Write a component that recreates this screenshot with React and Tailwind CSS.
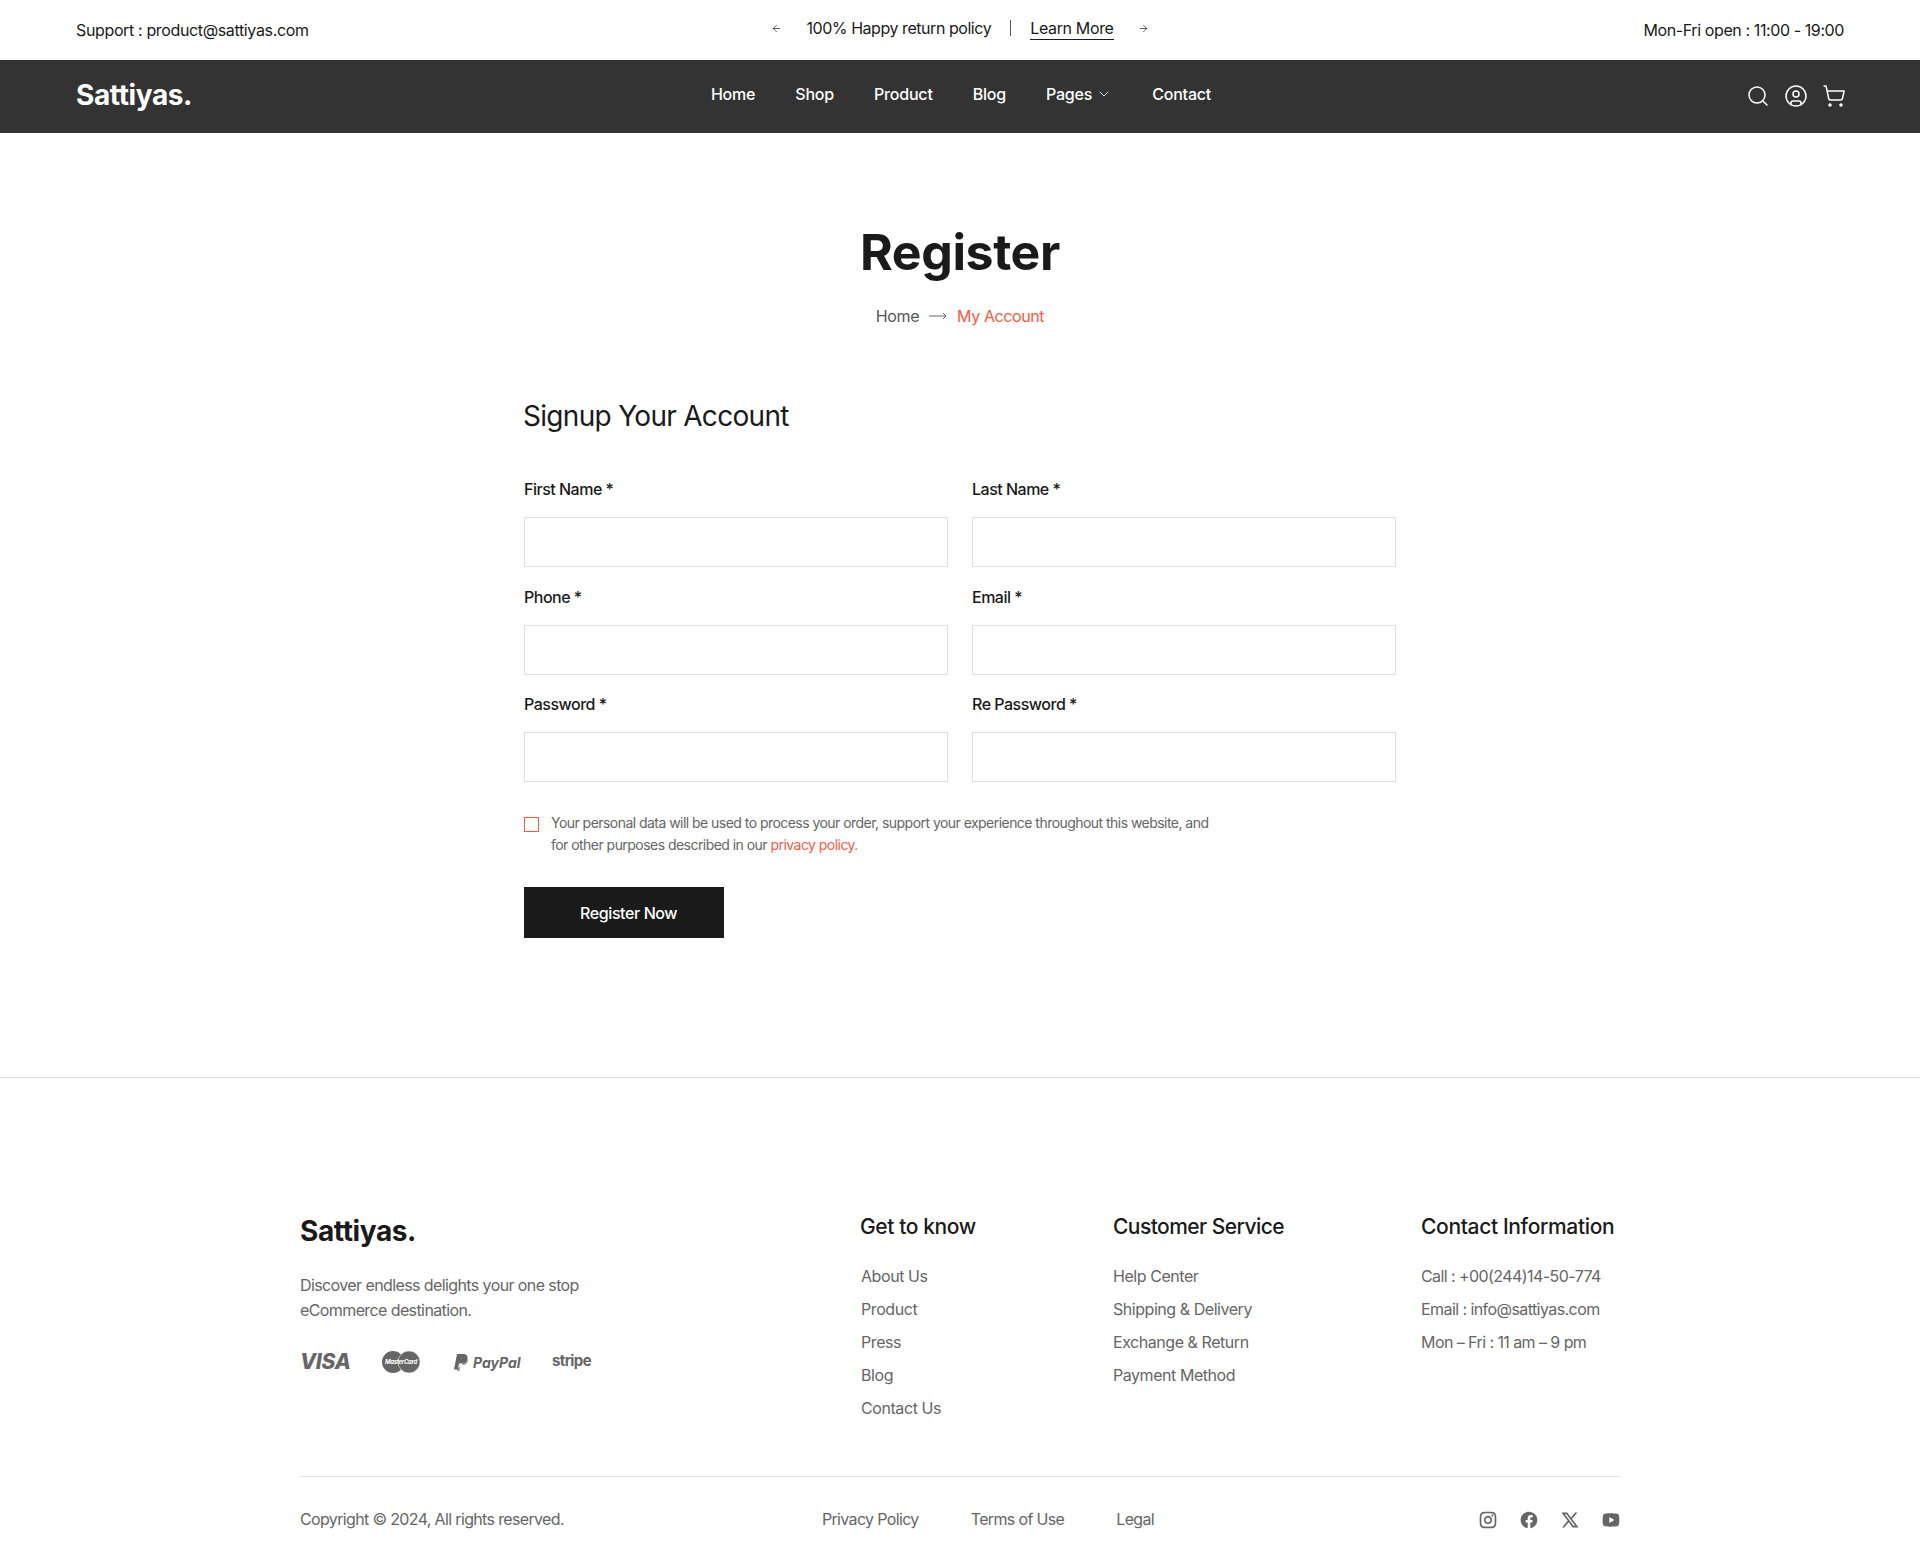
import React from "react";
import { ArrowLeft, ArrowRight, ChevronDown, Search, CircleUser, ShoppingCart } from "lucide-react";
import { RiInstagramLine, RiFacebookCircleFill, RiTwitterXLine, RiYoutubeFill } from "react-icons/ri";

function Field({ label }) {
  return (
    <div className="flex flex-col">
      <label className="h-[40px] text-[16px] leading-[24px] font-medium text-[#1a1a1a] tracking-[-0.5px]">{label}</label>
      <input className="h-[50px] w-full border border-[#dedede] bg-white outline-none" />
    </div>
  );
}

function FooterCol({ title, items, width, tracking, titleTracking }) {
  return (
    <div className={width}>
      <h4 className={"text-[21px] leading-[28px] font-medium text-[#1a1a1a] " + titleTracking}>{title}</h4>
      <ul className="mt-[19px] flex flex-col">
        {items.map((t) => (
          <li key={t} className={"h-[33px] text-[16px] leading-[33px] text-[#666666] " + tracking}>{t}</li>
        ))}
      </ul>
    </div>
  );
}

export default function App() {
  return (
    <div className="min-h-[1562px] bg-white font-['Inter',sans-serif] text-[#1a1a1a]">
      <div className="flex h-[60px] items-center justify-between px-[76px] text-[16px] tracking-[-0.36px]">
        <span className="w-[400px]">Support : product@sattiyas.com</span>
        <div className="flex items-center pb-[4px]">
          <ArrowLeft size={11} strokeWidth={1.5} />
          <span className="ml-[24px] tracking-[-0.45px]">100% Happy return policy</span>
          <span className="mx-[19px] h-[16px] w-px bg-[#555555]" />
          <span className="border-b border-[#1a1a1a] leading-[22px]">Learn More</span>
          <ArrowRight size={11} strokeWidth={1.5} className="ml-[24px]" />
        </div>
        <span className="w-[400px] text-right tracking-[-0.4px]">Mon-Fri open : 11:00 - 19:00</span>
      </div>

      <nav className="flex h-[73px] items-center justify-between bg-[#333333] px-[76px] text-white">
        <div className="w-[400px] pb-[4px] text-[28px] font-bold tracking-[-0.4px]">Sattiyas.</div>
        <ul className="flex items-center gap-[40px] pb-[6px] text-[16px] font-medium tracking-[-0.2px]">
          <li>Home</li>
          <li>Shop</li>
          <li>Product</li>
          <li>Blog</li>
          <li className="flex items-center gap-[4px]">Pages <ChevronDown size={16} strokeWidth={1.25} /></li>
          <li>Contact</li>
        </ul>
        <div className="-mr-[2px] flex w-[400px] items-center justify-end gap-[14px] pb-[2px]">
          <Search size={24} strokeWidth={1.5} />
          <CircleUser size={24} strokeWidth={1.5} />
          <ShoppingCart size={24} strokeWidth={1.5} />
        </div>
      </nav>

      <main className="h-[945px] border-b border-[#e2e2e2]">
        <div className="pt-[84px] text-center">
          <h1 className="text-[50px] font-bold leading-[70px] tracking-[-0.4px] text-[#1a1a1a]">Register</h1>
          <div className="mt-[17px] flex items-center justify-center gap-[10px] text-[16px] leading-[24px] tracking-[-0.4px]">
            <span className="text-[#555555]">Home</span>
            <svg width="18" height="8" viewBox="0 0 18 8" fill="none" stroke="#666666" strokeWidth="1"><path d="M0 4h17M14 1l3 3-3 3" /></svg>
            <span className="text-[#f55b44]">My Account</span>
          </div>
        </div>
        <div className="ml-[524px] mt-[68px] w-[872px]">
          <h2 className="-ml-px text-[28px] font-normal leading-[40px] tracking-[-0.7px] text-[#1a1a1a]">Signup Your Account</h2>
          <div className="mt-[41px] grid grid-cols-2 gap-x-[24px] gap-y-[17.5px]">
            <Field label="First Name *" />
            <Field label="Last Name *" />
            <Field label="Phone *" />
            <Field label="Email *" />
            <Field label="Password *" />
            <Field label="Re Password *" />
          </div>
          <div className="mt-[30px] flex items-start gap-[12px]">
            <span className="mt-[5px] h-[15px] w-[15px] shrink-0 border border-[#f55b44]" />
            <p className="w-[700px] text-[14px] leading-[22px] text-[#666666] tracking-[-0.54px]">
              Your personal data will be used to process your order, support your experience throughout this website, and<br />
              for other purposes described in our <span className="text-[#f55b44]">privacy policy.</span>
            </p>
          </div>
          <button className="mt-[31px] flex h-[51px] w-[200px] items-center bg-[#1a1a1a] pl-[56px] text-[16px] font-medium text-white tracking-[-0.4px]">Register Now</button>
        </div>
      </main>

      <footer className="mx-[300px] pt-[135px]">
        <div className="flex h-[264px] border-b border-[#e2e2e2]">
          <div className="w-[560px]">
            <div className="text-[28px] font-bold leading-[36px] tracking-[-0.4px] text-[#1a1a1a]">Sattiyas.</div>
            <p className="mt-[24px] text-[16px] leading-[25px] text-[#666666] tracking-[-0.6px]">Discover endless delights your one stop<br />eCommerce destination.</p>
            <div className="mt-[25px] flex items-center text-[#666666]">
              <span className="w-[82px] text-[21px] font-extrabold italic leading-[28px] tracking-[-0.3px]">VISA</span>
              <svg width="38" height="22" viewBox="0 0 38 22" className="mr-[34px]">
                <circle cx="11" cy="11" r="11" fill="#666666" />
                <circle cx="27" cy="11" r="11" fill="#666666" stroke="#ffffff" strokeWidth="0.5" />
                <text x="19" y="13" textAnchor="middle" fontSize="6" fontStyle="italic" fontWeight="700" letterSpacing="-0.3" fill="#ffffff">MasterCard</text>
              </svg>
              <svg width="14" height="17" viewBox="0 0 14 17" fill="#666666" className="mr-[5px]"><path d="M3 0h6c3 0 5 1.500 4.500 4.500C13 8 10.500 9.500 7.500 9.500H5L4 15.500H0z" /><path d="M13.800 5c.5 3-1.500 6-5.500 6H6.500L5.500 17H3l.4-2" opacity="0.7" /></svg>
              <span className="w-[79px] text-[14px] font-bold italic">PayPal</span>
              <span className="-mt-[2px] text-[15px] font-bold tracking-[-0.6px]">stripe</span>
            </div>
          </div>
          <FooterCol width="w-[253px]" titleTracking="tracking-[-0.4px]" tracking="tracking-[-0.42px] pl-px" title="Get to know" items={["About Us", "Product", "Press", "Blog", "Contact Us"]} />
          <FooterCol width="w-[308px]" titleTracking="tracking-[-0.55px]" tracking="tracking-[-0.45px]" title="Customer Service" items={["Help Center", "Shipping & Delivery", "Exchange & Return", "Payment Method"]} />
          <FooterCol width="w-[199px]" titleTracking="tracking-[-0.35px]" tracking="tracking-[-0.57px]" title="Contact Information" items={["Call : +00(244)14-50-774", "Email : info@sattiyas.com", "Mon – Fri : 11 am – 9 pm"]} />
        </div>
        <div className="flex h-[83px] items-center justify-between text-[16px] tracking-[-0.65px] text-[#666666]">
          <span className="w-[455px]">Copyright © 2024, All rights reserved.</span>
          <div className="flex gap-[52px]">
            <span>Privacy Policy</span>
            <span>Terms of Use</span>
            <span>Legal</span>
          </div>
          <div className="-mr-[1px] flex w-[400px] items-center justify-end gap-[21px] pt-[2px]">
            <RiInstagramLine size={20} />
            <RiFacebookCircleFill size={20} />
            <RiTwitterXLine size={20} />
            <RiYoutubeFill size={20} />
          </div>
        </div>
      </footer>
    </div>
  );
}
